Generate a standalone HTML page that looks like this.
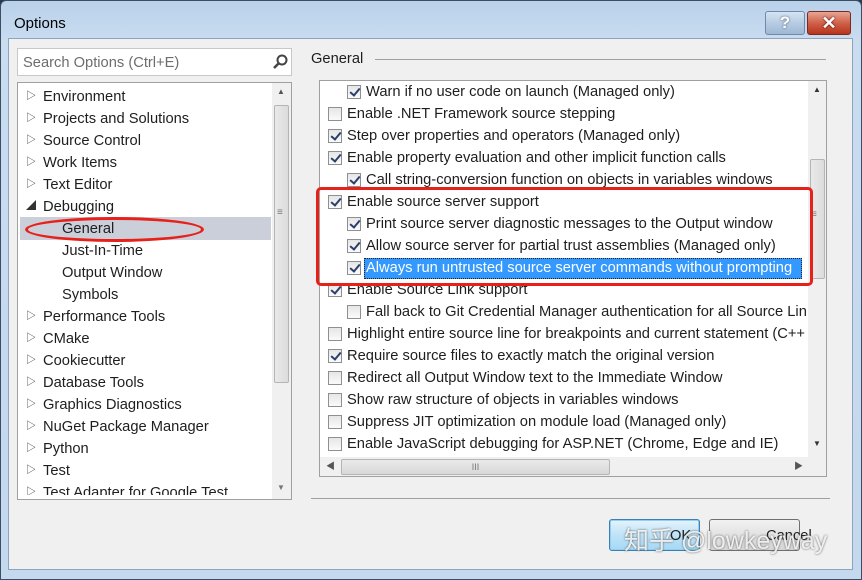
<!DOCTYPE html>
<html><head><meta charset="utf-8"><style>
*{margin:0;padding:0;box-sizing:border-box}
body{width:862px;height:580px;overflow:hidden;background:#2b3a4a;font-family:"Liberation Sans","Noto Sans CJK SC",sans-serif;font-size:14.7px;color:#1e1e1e;position:relative}
.a{position:absolute}
.win{left:0;top:0;width:862px;height:580px;border-radius:6px 6px 0 0;background:linear-gradient(#b9d1ea,#c9dcf0 40px,#c4d8ee);border:1px solid #3b4e63}
.client{left:8px;top:38px;width:845px;height:532px;background:#f0f0f0;border:1px solid #8ea4bd}
.t{white-space:nowrap;line-height:22px;height:22px}
.cb{position:absolute;width:14px;height:14px;border:1px solid #8e8f8f;background:linear-gradient(#e6e6e6,#fafafa);top:4px}
.cb.c::after{content:"";position:absolute;left:4px;top:0px;width:4px;height:8px;border:solid #2a3f6b;border-width:0 2px 2px 0;transform:rotate(40deg)}
.tri{position:absolute;left:26px;font-size:10px;color:#333}
</style></head><body>
<div class="a win"></div>
<div class="a t" style="left:14px;top:13px;font-size:15px;color:#000">Options</div>
<div class="a" style="left:765px;top:11px;width:40px;height:24px;border:1px solid #6f8aa8;border-radius:3px;background:linear-gradient(#d6e3f1,#b7cce3 50%,#9fb8d4);color:#fff;font-weight:bold;text-align:center;font-size:17px;line-height:22px;text-shadow:0 0 2px #456">?</div>
<div class="a" style="left:807px;top:11px;width:44px;height:24px;border:1px solid #7a2a1e;border-radius:3px;background:linear-gradient(#e8a593,#d0614a 50%,#b8341c);color:#fff;font-weight:bold;text-align:center;font-size:18px;line-height:22px;text-shadow:0 0 2px #400">✕</div>
<div class="a client"></div>
<div class="a" style="left:17px;top:48px;width:275px;height:28px;background:#fff;border:1px solid #c8c8c8"></div>
<div class="a t" style="left:23px;top:52px;color:#6d6d6d">Search Options (Ctrl+E)</div>
<svg class="a" style="left:272px;top:54px" width="16" height="16"><circle cx="10" cy="6" r="4.5" fill="none" stroke="#444" stroke-width="2"/><line x1="7" y1="9" x2="2" y2="14" stroke="#444" stroke-width="2.5"/></svg>
<div class="a" style="left:17px;top:82px;width:275px;height:418px;background:#fff;border:1px solid #a0a0a0;overflow:hidden">
 <div class="a" style="left:2px;top:134px;width:251px;height:23px;background:#cbcfd9"></div>
 <div class="a" style="left:254px;top:0;width:19px;height:416px;background:#f0f0f0"></div>
 <div class="a" style="left:256px;top:22px;width:15px;height:278px;background:linear-gradient(90deg,#e9e9e9,#dcdcdc);border:1px solid #b5b5b5;border-radius:2px"></div>
 <div class="a" style="left:259px;top:4px;font-size:8px;color:#555">▲</div>
 <div class="a" style="left:259px;top:400px;font-size:8px;color:#777">▼</div>
 <div class="a" style="left:259px;top:124px;font-size:10px;color:#777">≡</div>
</div>
<div class="a" style="left:0;top:86px">
 <div class="a t tri" style="top:0">▷</div><div class="a t" style="left:43px;top:0">Environment</div>
 <div class="a t tri" style="top:22px">▷</div><div class="a t" style="left:43px;top:22px">Projects and Solutions</div>
 <div class="a t tri" style="top:44px">▷</div><div class="a t" style="left:43px;top:44px">Source Control</div>
 <div class="a t tri" style="top:66px">▷</div><div class="a t" style="left:43px;top:66px">Work Items</div>
 <div class="a t tri" style="top:88px">▷</div><div class="a t" style="left:43px;top:88px">Text Editor</div>
 <div class="a t tri" style="top:110px">◢</div><div class="a t" style="left:43px;top:110px">Debugging</div>
 <div class="a t" style="left:62px;top:132px">General</div>
 <div class="a t" style="left:62px;top:154px">Just-In-Time</div>
 <div class="a t" style="left:62px;top:176px">Output Window</div>
 <div class="a t" style="left:62px;top:198px">Symbols</div>
 <div class="a t tri" style="top:220px">▷</div><div class="a t" style="left:43px;top:220px">Performance Tools</div>
 <div class="a t tri" style="top:242px">▷</div><div class="a t" style="left:43px;top:242px">CMake</div>
 <div class="a t tri" style="top:264px">▷</div><div class="a t" style="left:43px;top:264px">Cookiecutter</div>
 <div class="a t tri" style="top:286px">▷</div><div class="a t" style="left:43px;top:286px">Database Tools</div>
 <div class="a t tri" style="top:308px">▷</div><div class="a t" style="left:43px;top:308px">Graphics Diagnostics</div>
 <div class="a t tri" style="top:330px">▷</div><div class="a t" style="left:43px;top:330px">NuGet Package Manager</div>
 <div class="a t tri" style="top:352px">▷</div><div class="a t" style="left:43px;top:352px">Python</div>
 <div class="a t tri" style="top:374px">▷</div><div class="a t" style="left:43px;top:374px">Test</div>
 <div class="a t tri" style="top:396px;height:13px;overflow:hidden">▷</div><div class="a t" style="left:43px;top:396px;height:13px;overflow:hidden">Test Adapter for Google Test</div>
</div>
<div class="a" style="left:25px;top:217px;width:179px;height:25px;border:3px solid #e8201a;border-radius:50%"></div>
<div class="a t" style="left:311px;top:48px">General</div>
<div class="a" style="left:375px;top:59px;width:451px;height:1px;background:#a0a0a0"></div>
<div class="a" style="left:319px;top:80px;width:508px;height:397px;background:#fff;border:1px solid #a0a0a0;overflow:hidden">
 <div class="a" style="left:488px;top:0;width:18px;height:376px;background:#f0f0f0"></div>
 <div class="a" style="left:490px;top:78px;width:15px;height:120px;background:linear-gradient(90deg,#e9e9e9,#dcdcdc);border:1px solid #b5b5b5;border-radius:2px"></div>
 <div class="a" style="left:493px;top:4px;font-size:8px;color:#333">▲</div>
 <div class="a" style="left:493px;top:358px;font-size:8px;color:#333">▼</div>
 <div class="a" style="left:491px;top:128px;font-size:10px;color:#777">≡</div>
 <div class="a" style="left:0;top:376px;width:506px;height:19px;background:#f0f0f0"></div>
 <div class="a" style="left:21px;top:378px;width:269px;height:16px;background:linear-gradient(#eaeaea,#d8d8d8);border:1px solid #b5b5b5;border-radius:2px;text-align:center;font-size:9px;color:#777;line-height:14px">III</div>
 <div class="a" style="left:6px;top:378px;font-size:9px;color:#555">◀</div>
 <div class="a" style="left:474px;top:378px;font-size:9px;color:#555">▶</div>
 <div class="a" style="left:44px;top:177px;width:438px;height:21px;background:#3399ff;border:1px dotted #222"></div>
</div>
<div class="a" style="left:0;top:80px;width:807px;height:376px;overflow:hidden">
 <div class="cb c" style="left:347px;top:5px"></div><div class="a t" style="left:366px;top:1px">Warn if no user code on launch (Managed only)</div>
 <div class="cb" style="left:328px;top:27px"></div><div class="a t" style="left:347px;top:23px">Enable .NET Framework source stepping</div>
 <div class="cb c" style="left:328px;top:49px"></div><div class="a t" style="left:347px;top:45px">Step over properties and operators (Managed only)</div>
 <div class="cb c" style="left:328px;top:71px"></div><div class="a t" style="left:347px;top:67px">Enable property evaluation and other implicit function calls</div>
 <div class="cb c" style="left:347px;top:93px"></div><div class="a t" style="left:366px;top:89px">Call string-conversion function on objects in variables windows</div>
 <div class="cb c" style="left:328px;top:115px"></div><div class="a t" style="left:347px;top:111px">Enable source server support</div>
 <div class="cb c" style="left:347px;top:137px"></div><div class="a t" style="left:366px;top:133px">Print source server diagnostic messages to the Output window</div>
 <div class="cb c" style="left:347px;top:159px"></div><div class="a t" style="left:366px;top:155px">Allow source server for partial trust assemblies (Managed only)</div>
 <div class="cb c" style="left:347px;top:181px"></div><div class="a t" style="left:366px;top:177px;color:#fff">Always run untrusted source server commands without prompting</div>
 <div class="cb c" style="left:328px;top:203px"></div><div class="a t" style="left:347px;top:199px">Enable Source Link support</div>
 <div class="cb" style="left:347px;top:225px"></div><div class="a t" style="left:366px;top:221px">Fall back to Git Credential Manager authentication for all Source Link requests</div>
 <div class="cb" style="left:328px;top:247px"></div><div class="a t" style="left:347px;top:243px">Highlight entire source line for breakpoints and current statement (C++ only)</div>
 <div class="cb c" style="left:328px;top:269px"></div><div class="a t" style="left:347px;top:265px">Require source files to exactly match the original version</div>
 <div class="cb" style="left:328px;top:291px"></div><div class="a t" style="left:347px;top:287px">Redirect all Output Window text to the Immediate Window</div>
 <div class="cb" style="left:328px;top:313px"></div><div class="a t" style="left:347px;top:309px">Show raw structure of objects in variables windows</div>
 <div class="cb" style="left:328px;top:335px"></div><div class="a t" style="left:347px;top:331px">Suppress JIT optimization on module load (Managed only)</div>
 <div class="cb" style="left:328px;top:357px"></div><div class="a t" style="left:347px;top:353px">Enable JavaScript debugging for ASP.NET (Chrome, Edge and IE)</div>
</div>
<div class="a" style="left:316px;top:187px;width:497px;height:99px;border:3px solid #e8201a;border-radius:5px"></div>
<div class="a" style="left:311px;top:498px;width:519px;height:1px;background:#a0a0a0"></div>
<div class="a" style="left:609px;top:519px;width:91px;height:32px;border:1px solid #3c7fb1;border-radius:3px;background:linear-gradient(#e5f4fc,#bfe3f7 50%,#a6d8f5);box-shadow:inset 0 0 0 1px #8fd0f3"></div>
<div class="a" style="left:709px;top:519px;width:91px;height:32px;border:1px solid #707070;border-radius:3px;background:linear-gradient(#f2f2f2,#e3e3e3 50%,#d6d6d6)"></div>
<div class="a t" style="left:670px;top:525px">OK</div>
<div class="a t" style="left:766px;top:525px">Cancel</div>
<div class="a t" style="left:624px;top:524px;font-size:25px;color:rgba(255,255,255,.85);text-shadow:0 0 2px #555;line-height:34px;height:34px">知乎 @lowkeyway</div>
</body></html>
